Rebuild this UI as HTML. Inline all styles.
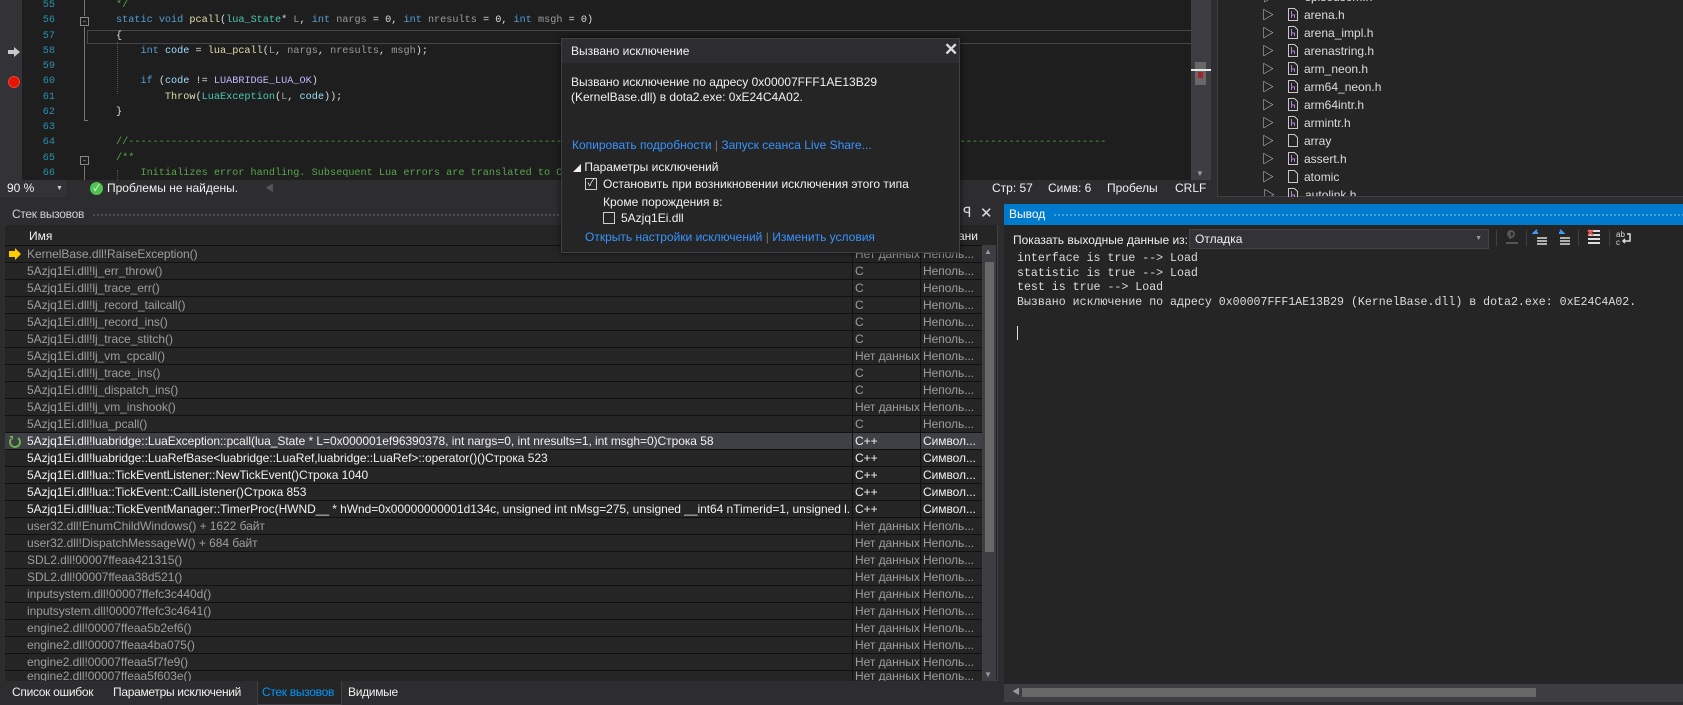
<!DOCTYPE html>
<html><head><meta charset="utf-8"><style>
*{margin:0;padding:0;box-sizing:border-box}
body{width:1683px;height:705px;overflow:hidden;background:#2d2d30;position:relative;font-family:"Liberation Sans","Noto Sans CJK SC",sans-serif;font-size:12px;color:#f1f1f1}
.a{position:absolute;white-space:nowrap}
.mono{font-family:"Liberation Mono","DejaVu Sans Mono",monospace}
.code{font-size:10.2px;line-height:15.27px}
.kw{color:#569cd6}.ty{color:#4ec9b0}.fn{color:#dcdcaa}.cm{color:#57a64a}.mc{color:#beb7ff}.pr{color:#9a9a9a}.lv{color:#9cdcfe}.tx{color:#dcdcdc}
.row{position:absolute;left:5px;width:977px;height:17px;border-bottom:1px solid #111;font-size:12px;letter-spacing:-0.05px;line-height:16px;color:#9d9d9d;background:#252526}
.row span{position:absolute;white-space:nowrap;overflow:hidden}
.row .n{left:22px;width:822px}
.row .l{left:847px;width:68px;padding-left:2px;border-left:1px solid #111;height:16px}
.row .s{left:915px;width:62px;padding-left:2px;border-left:1px solid #111;height:16px}
.row.u{color:#f1f1f1}
.link{color:#3794ff}
</style></head><body>

<!-- editor -->
<div class="a" style="left:0;top:0;width:1191px;height:180px;background:#1e1e1e"></div>
<div class="a" style="left:0;top:0;width:22px;height:180px;background:#333337"></div>
<div class="a" style="left:87px;top:30px;width:1104px;height:14px;border:1px solid #464646;border-right:none"></div>
<div class="a" style="left:8px;top:76px;width:12px;height:12px;border-radius:50%;background:#e51400;border:1px solid #fff3"></div>
<svg class="a" style="left:7px;top:47px" width="14" height="10"><path d="M1 3h6V0l6 5-6 5V7H1z" fill="#c8c8c8"/></svg>
<div class="a mono code" style="left:30px;top:-2px;width:25px;text-align:right;color:#2b91af">55<br>56<br>57<br>58<br>59<br>60<br>61<br>62<br>63<br>64<br>65<br>66</div>
<div class="a" style="left:80px;top:17px;width:9px;height:9px;border:1px solid #888;font-size:9px;line-height:6px;text-align:center;color:#aaa">-</div>
<div class="a" style="left:80px;top:156px;width:9px;height:9px;border:1px solid #888;font-size:9px;line-height:6px;text-align:center;color:#aaa">-</div>
<div class="a" style="left:84px;top:0;width:1px;height:16px;background:#777"></div>
<div class="a" style="left:84px;top:27px;width:1px;height:94px;background:#777"></div>
<div class="a" style="left:84px;top:120px;width:4px;height:1px;background:#777"></div>
<div class="a" style="left:84px;top:166px;width:1px;height:14px;background:#777"></div>
<div class="a" style="left:117px;top:42px;width:0;height:52px;border-left:1px dotted #555"></div>
<div class="a" style="left:117px;top:170px;width:0;height:10px;border-left:1px dotted #555"></div>
<div class="a mono code tx" style="left:116px;top:-2px;width:1075px;overflow:hidden">
<div class="cm">*/</div>
<div><span class="kw">static</span> <span class="kw">void</span> <span class="fn">pcall</span>(<span class="ty">lua_State</span>* <span class="pr">L</span>, <span class="kw">int</span> <span class="pr">nargs</span> = 0, <span class="kw">int</span> <span class="pr">nresults</span> = 0, <span class="kw">int</span> <span class="pr">msgh</span> = 0)</div>
<div>{</div>
<div>&nbsp;&nbsp;&nbsp;&nbsp;<span class="kw">int</span> <span class="lv">code</span> = <span class="fn">lua_pcall</span>(<span class="pr">L</span>, <span class="pr">nargs</span>, <span class="pr">nresults</span>, <span class="pr">msgh</span>);</div>
<div>&nbsp;</div>
<div>&nbsp;&nbsp;&nbsp;&nbsp;<span class="kw">if</span> (<span class="lv">code</span> != <span class="mc">LUABRIDGE_LUA_OK</span>)</div>
<div>&nbsp;&nbsp;&nbsp;&nbsp;&nbsp;&nbsp;&nbsp;&nbsp;<span class="fn">Throw</span>(<span class="ty">LuaException</span>(<span class="pr">L</span>, <span class="lv">code</span>));</div>
<div>}</div>
<div>&nbsp;</div>
<div class="cm">//----------------------------------------------------------------------------------------------------------------------------------------------------------------</div>
<div class="cm">/**</div>
<div class="cm">&nbsp;&nbsp;&nbsp;&nbsp;Initializes error handling. Subsequent Lua errors are translated to C++ exceptions.</div>
</div>
<div class="a" style="left:1191px;top:0;width:20px;height:180px;background:#3e3e42"></div>
<div class="a" style="left:1195px;top:62px;width:11px;height:23px;background:#686868"></div>
<div class="a" style="left:1191px;top:69px;width:20px;height:2px;background:#e8e8e8"></div>
<div class="a" style="left:1198px;top:72px;width:5px;height:6px;background:#a1262a"></div>
<div class="a" style="left:1196px;top:169px;color:#999;font-size:8px">▼</div>
<!-- status bar -->
<div class="a" style="left:0;top:180px;width:1211px;height:17px;background:#2d2d30"></div>
<div class="a" style="left:0;top:180px;width:66px;height:17px;background:#333337;padding-left:7px;line-height:17px">90 %<span style="position:absolute;left:56px;font-size:7px;color:#ccc">▼</span></div>
<div class="a" style="left:90px;top:182px;width:13px;height:13px;border-radius:50%;background:#4fc34f;color:#fff;font-size:9px;line-height:13px;text-align:center">✓</div>
<div class="a" style="left:107px;top:180px;line-height:17px">Проблемы не найдены.</div>
<div class="a" style="left:265px;top:180px;line-height:17px;color:#555;font-size:9px">◀</div>
<div class="a" style="left:992px;top:180px;line-height:17px">Стр: 57</div>
<div class="a" style="left:1048px;top:180px;line-height:17px">Симв: 6</div>
<div class="a" style="left:1107px;top:180px;line-height:17px">Пробелы</div>
<div class="a" style="left:1175px;top:180px;line-height:17px">CRLF</div>

<!-- solution tree -->
<div class="a" style="left:1217px;top:0;width:466px;height:197px;background:#252526;border-left:1px solid #3f3f46;border-bottom:1px solid #3f3f46;overflow:hidden">
<div style="position:absolute;left:45px;top:-12px;font-size:12px;line-height:18px;color:#dcdcdc">▷&nbsp;&nbsp;&nbsp;&nbsp;&nbsp;&nbsp;&nbsp;&nbsp;&nbsp;spisousom.h</div>
<div style="position:absolute;left:45px;top:186px;font-size:12px;line-height:18px;color:#dcdcdc">▷&nbsp;&nbsp;&nbsp;&nbsp;&nbsp;&nbsp;&nbsp;&nbsp;&nbsp;autolink.h</div>
</div>
<div class="a" style="left:1262px;top:6px;font-size:12px;line-height:18px;color:#dcdcdc">
<div>▷&nbsp;&nbsp;&nbsp;&nbsp;&nbsp;&nbsp;&nbsp;&nbsp;&nbsp;arena.h</div>
<div>▷&nbsp;&nbsp;&nbsp;&nbsp;&nbsp;&nbsp;&nbsp;&nbsp;&nbsp;arena_impl.h</div>
<div>▷&nbsp;&nbsp;&nbsp;&nbsp;&nbsp;&nbsp;&nbsp;&nbsp;&nbsp;arenastring.h</div>
<div>▷&nbsp;&nbsp;&nbsp;&nbsp;&nbsp;&nbsp;&nbsp;&nbsp;&nbsp;arm_neon.h</div>
<div>▷&nbsp;&nbsp;&nbsp;&nbsp;&nbsp;&nbsp;&nbsp;&nbsp;&nbsp;arm64_neon.h</div>
<div>▷&nbsp;&nbsp;&nbsp;&nbsp;&nbsp;&nbsp;&nbsp;&nbsp;&nbsp;arm64intr.h</div>
<div>▷&nbsp;&nbsp;&nbsp;&nbsp;&nbsp;&nbsp;&nbsp;&nbsp;&nbsp;armintr.h</div>
<div>▷&nbsp;&nbsp;&nbsp;&nbsp;&nbsp;&nbsp;&nbsp;&nbsp;&nbsp;array</div>
<div>▷&nbsp;&nbsp;&nbsp;&nbsp;&nbsp;&nbsp;&nbsp;&nbsp;&nbsp;assert.h</div>
<div>▷&nbsp;&nbsp;&nbsp;&nbsp;&nbsp;&nbsp;&nbsp;&nbsp;&nbsp;atomic</div>
</div>
<svg class="a" style="left:1287px;top:0" width="12" height="197">
<g fill="none" stroke="#c8c8c8" stroke-width="1">
<path d="M1.5 8.5h6l3 3v9h-9z"/><path d="M1.5 26.5h6l3 3v9h-9z"/><path d="M1.5 44.5h6l3 3v9h-9z"/><path d="M1.5 62.5h6l3 3v9h-9z"/><path d="M1.5 80.5h6l3 3v9h-9z"/><path d="M1.5 98.5h6l3 3v9h-9z"/><path d="M1.5 116.5h6l3 3v9h-9z"/><path d="M1.5 134.5h6l3 3v9h-9z"/><path d="M1.5 152.5h6l3 3v9h-9z"/><path d="M1.5 170.5h6l3 3v9h-9z"/><path d="M1.5 188.5h6l3 3v9h-9z"/>
</g>
<g fill="none" stroke="#b180d7" stroke-width="1">
<path d="M4.5 11v7M4.5 15h3v3"/><path d="M4.5 29v7M4.5 33h3v3"/><path d="M4.5 47v7M4.5 51h3v3"/><path d="M4.5 65v7M4.5 69h3v3"/><path d="M4.5 83v7M4.5 87h3v3"/><path d="M4.5 101v7M4.5 105h3v3"/><path d="M4.5 119v7M4.5 123h3v3"/><path d="M4.5 155v7M4.5 159h3v3"/><path d="M4.5 191v7M4.5 195h3v3"/>
</g></svg>

<!-- call stack panel -->
<div class="a" style="left:5px;top:203px;width:993px;height:478px;background:#252526;border:1px solid #3f3f46"></div>
<div class="a" style="left:5px;top:203px;width:993px;height:22px;background:#2d2d30"></div>
<div class="a" style="left:12px;top:207px;font-size:12px;letter-spacing:-0.3px;color:#d0d0d0">Стек вызовов</div>
<div class="a" style="left:92px;top:213px;width:860px;height:4px;background-image:radial-gradient(#55555a 0.8px,transparent 1px);background-size:4px 4px"></div>
<div class="a" style="left:963px;top:204px;font-size:14px;color:#ddd">ꟼ</div>
<div class="a" style="left:980px;top:204px;font-size:15px;color:#ddd">✕</div>
<div class="a" style="left:5px;top:226px;width:977px;height:20px;background:#252526;border-bottom:1px solid #111"></div>
<div class="a" style="left:29px;top:229px;font-size:12px">Имя</div>
<div class="a" style="left:958px;top:229px;font-size:12px">ани</div>

<div class="row" style="top:246px"><span class="n">KernelBase.dll!RaiseException()</span><span class="l">Нет данных</span><span class="s">Неполь...</span></div>
<div class="row" style="top:263px"><span class="n">5Azjq1Ei.dll!lj_err_throw()</span><span class="l">C</span><span class="s">Неполь...</span></div>
<div class="row" style="top:280px"><span class="n">5Azjq1Ei.dll!lj_trace_err()</span><span class="l">C</span><span class="s">Неполь...</span></div>
<div class="row" style="top:297px"><span class="n">5Azjq1Ei.dll!lj_record_tailcall()</span><span class="l">C</span><span class="s">Неполь...</span></div>
<div class="row" style="top:314px"><span class="n">5Azjq1Ei.dll!lj_record_ins()</span><span class="l">C</span><span class="s">Неполь...</span></div>
<div class="row" style="top:331px"><span class="n">5Azjq1Ei.dll!lj_trace_stitch()</span><span class="l">C</span><span class="s">Неполь...</span></div>
<div class="row" style="top:348px"><span class="n">5Azjq1Ei.dll!lj_vm_cpcall()</span><span class="l">Нет данных</span><span class="s">Неполь...</span></div>
<div class="row" style="top:365px"><span class="n">5Azjq1Ei.dll!lj_trace_ins()</span><span class="l">C</span><span class="s">Неполь...</span></div>
<div class="row" style="top:382px"><span class="n">5Azjq1Ei.dll!lj_dispatch_ins()</span><span class="l">C</span><span class="s">Неполь...</span></div>
<div class="row" style="top:399px"><span class="n">5Azjq1Ei.dll!lj_vm_inshook()</span><span class="l">Нет данных</span><span class="s">Неполь...</span></div>
<div class="row" style="top:416px"><span class="n">5Azjq1Ei.dll!lua_pcall()</span><span class="l">C</span><span class="s">Неполь...</span></div>
<div class="row u" style="top:433px;background:#3f3f46"><span class="n">5Azjq1Ei.dll!luabridge::LuaException::pcall(lua_State * L=0x000001ef96390378, int nargs=0, int nresults=1, int msgh=0)Строка 58</span><span class="l">C++</span><span class="s">Символ...</span></div>
<div class="row u" style="top:450px"><span class="n">5Azjq1Ei.dll!luabridge::LuaRefBase&lt;luabridge::LuaRef,luabridge::LuaRef&gt;::operator()()Строка 523</span><span class="l">C++</span><span class="s">Символ...</span></div>
<div class="row u" style="top:467px"><span class="n">5Azjq1Ei.dll!lua::TickEventListener::NewTickEvent()Строка 1040</span><span class="l">C++</span><span class="s">Символ...</span></div>
<div class="row u" style="top:484px"><span class="n">5Azjq1Ei.dll!lua::TickEvent::CallListener()Строка 853</span><span class="l">C++</span><span class="s">Символ...</span></div>
<div class="row u" style="top:501px"><span class="n">5Azjq1Ei.dll!lua::TickEventManager::TimerProc(HWND__ * hWnd=0x00000000001d134c, unsigned int nMsg=275, unsigned __int64 nTimerid=1, unsigned l...</span><span class="l">C++</span><span class="s">Символ...</span></div>
<div class="row" style="top:518px"><span class="n">user32.dll!EnumChildWindows() + 1622 байт</span><span class="l">Нет данных</span><span class="s">Неполь...</span></div>
<div class="row" style="top:535px"><span class="n">user32.dll!DispatchMessageW() + 684 байт</span><span class="l">Нет данных</span><span class="s">Неполь...</span></div>
<div class="row" style="top:552px"><span class="n">SDL2.dll!00007ffeaa421315()</span><span class="l">Нет данных</span><span class="s">Неполь...</span></div>
<div class="row" style="top:569px"><span class="n">SDL2.dll!00007ffeaa38d521()</span><span class="l">Нет данных</span><span class="s">Неполь...</span></div>
<div class="row" style="top:586px"><span class="n">inputsystem.dll!00007ffefc3c440d()</span><span class="l">Нет данных</span><span class="s">Неполь...</span></div>
<div class="row" style="top:603px"><span class="n">inputsystem.dll!00007ffefc3c4641()</span><span class="l">Нет данных</span><span class="s">Неполь...</span></div>
<div class="row" style="top:620px"><span class="n">engine2.dll!00007ffeaa5b2ef6()</span><span class="l">Нет данных</span><span class="s">Неполь...</span></div>
<div class="row" style="top:637px"><span class="n">engine2.dll!00007ffeaa4ba075()</span><span class="l">Нет данных</span><span class="s">Неполь...</span></div>
<div class="row" style="top:654px"><span class="n">engine2.dll!00007ffeaa5f7fe9()</span><span class="l">Нет данных</span><span class="s">Неполь...</span></div>
<div class="row" style="top:671px;height:10px;border:none;overflow:hidden"><span class="n" style="top:-3px">engine2.dll!00007ffeaa5f603e()</span><span class="l" style="top:-3px">Нет данных</span><span class="s" style="top:-3px">Неполь...</span></div>
<svg class="a" style="left:8px;top:248px" width="14" height="12"><path d="M1 3h6V0l6 6-6 6V9H1z" fill="#ffcc00"/></svg>
<svg class="a" style="left:8px;top:435px" width="14" height="13"><path d="M10 3A5 5 0 1 1 3 4" fill="none" stroke="#6ab04c" stroke-width="2"/><path d="M1 1l4 0 0 4z" fill="#6ab04c"/></svg>
<div class="a" style="left:982px;top:245px;width:14px;height:436px;background:#3e3e42"></div>
<div class="a" style="left:985px;top:262px;width:9px;height:290px;background:#686868"></div>
<div class="a" style="left:984px;top:247px;font-size:8px;color:#999">▲</div>
<div class="a" style="left:984px;top:670px;font-size:8px;color:#999">▼</div>

<!-- bottom tabs -->
<div class="a" style="left:257px;top:681px;width:85px;height:24px;background:#252526;border:1px solid #3f3f46;border-top:none"></div>
<div class="a" style="left:12px;top:685px;font-size:12px;letter-spacing:-0.3px">Список ошибок</div>
<div class="a" style="left:113px;top:685px;font-size:12px;letter-spacing:-0.3px">Параметры исключений</div>
<div class="a" style="left:262px;top:685px;font-size:12px;letter-spacing:-0.3px;color:#0097fb">Стек вызовов</div>
<div class="a" style="left:348px;top:685px;font-size:12px;letter-spacing:-0.3px">Видимые</div>

<!-- output panel -->
<div class="a" style="left:1004px;top:204px;width:679px;height:21px;background:#007acc"></div>
<div class="a" style="left:1009px;top:207px;font-size:12px;color:#fff">Вывод</div>
<div class="a" style="left:1053px;top:213px;width:630px;height:4px;background-image:radial-gradient(#5aa6dc 0.8px,transparent 1px);background-size:4px 4px"></div>
<div class="a" style="left:1004px;top:225px;width:679px;height:459px;background:#252526"></div>
<div class="a" style="left:1013px;top:233px;font-size:12px">Показать выходные данные из:</div>
<div class="a" style="left:1189px;top:229px;width:300px;height:20px;background:#333337;border:1px solid #434346;padding-left:5px;line-height:18px;font-size:12px">Отладка<span style="position:absolute;right:6px;font-size:7px;color:#999">▼</span></div>
<div class="a" style="left:1496px;top:230px;width:1px;height:16px;background:#3f3f46"></div>
<div class="a" style="left:1526px;top:230px;width:1px;height:16px;background:#3f3f46"></div>
<div class="a" style="left:1578px;top:230px;width:1px;height:16px;background:#3f3f46"></div>
<div class="a" style="left:1609px;top:230px;width:1px;height:16px;background:#3f3f46"></div>
<svg class="a" style="left:1503px;top:229px" width="130" height="18">
<g stroke="#555" stroke-width="2" fill="none"><path d="M7 2v8M3 14h12"/><circle cx="8" cy="5" r="3"/></g>
<path d="M35 4h-4l3-3M31 4h4" stroke="#3b9bf5" stroke-width="2" fill="none"/><path d="M34 9h10M34 12h10M34 15h10" stroke="#ddd" stroke-width="1.5"/>
<path d="M56 4h4l-3-3M56 4h4" stroke="#3b9bf5" stroke-width="2" fill="none"/><path d="M57 9h10M57 12h10M57 15h10" stroke="#ddd" stroke-width="1.5"/>
<path d="M85 2h12M85 6h12M85 10h12M85 14h12" stroke="#ddd" stroke-width="2"/><path d="M85 1l5 5M90 1l-5 5" stroke="#e05050" stroke-width="2"/>
<text x="113" y="8" font-size="8" fill="#ddd" font-family="Liberation Sans">ab</text><text x="113" y="16" font-size="8" fill="#ddd" font-family="Liberation Sans">c</text><path d="M124 5h3v7h-6M122 10l-2 2 2 2" stroke="#ddd" stroke-width="1.5" fill="none"/>
</svg>
<div class="a mono" style="left:1017px;top:252px;font-size:11.6px;line-height:14.5px;color:#dcdcdc">interface is true --&gt; Load<br>statistic is true --&gt; Load<br>test is true --&gt; Load<br>Вызвано исключение по адресу 0x00007FFF1AE13B29 (KernelBase.dll) в dota2.exe: 0xE24C4A02.</div>
<div class="a" style="left:1017px;top:326px;width:1px;height:14px;background:#ddd"></div>
<div class="a" style="left:1004px;top:684px;width:679px;height:18px;background:#3e3e42"></div>
<div class="a" style="left:1022px;top:688px;width:514px;height:9px;background:#686868"></div>
<div class="a" style="left:1012px;top:686px;font-size:8px;color:#999">◀</div>

<!-- exception dialog -->
<div class="a" style="left:561px;top:38px;width:399px;height:215px;background:#252526;border:1px solid #3f3f46;box-shadow:0 0 6px #000a"></div>
<div class="a" style="left:562px;top:39px;width:397px;height:24px;background:#2d2d30"></div>
<div class="a" style="left:571px;top:44px;font-size:12px">Вызвано исключение</div>
<div class="a" style="left:944px;top:40px;font-size:17px;font-weight:bold;color:#ddd">✕</div>
<div class="a" style="left:571px;top:75px;font-size:12px;line-height:14.5px">Вызвано исключение по адресу 0x00007FFF1AE13B29<br>(KernelBase.dll) в dota2.exe: 0xE24C4A02.</div>
<div class="a" style="left:572px;top:138px;font-size:12px"><span class="link">Копировать подробности</span><span style="color:#777"> | </span><span class="link">Запуск сеанса Live Share...</span></div>
<div class="a" style="left:573px;top:160px;font-size:12px"><span style="font-size:8px">◢</span> Параметры исключений</div>
<div class="a" style="left:585px;top:178px;width:12px;height:12px;border:1px solid #ccc;font-size:10px;line-height:10px;text-align:center">✓</div>
<div class="a" style="left:603px;top:177px;font-size:12px">Остановить при возникновении исключения этого типа</div>
<div class="a" style="left:603px;top:195px;font-size:12px">Кроме порождения в:</div>
<div class="a" style="left:603px;top:212px;width:12px;height:12px;border:1px solid #ccc"></div>
<div class="a" style="left:621px;top:211px;font-size:12px">5Azjq1Ei.dll</div>
<div class="a" style="left:585px;top:230px;font-size:12px"><span class="link">Открыть настройки исключений</span><span style="color:#777"> | </span><span class="link">Изменить условия</span></div>
</body></html>
